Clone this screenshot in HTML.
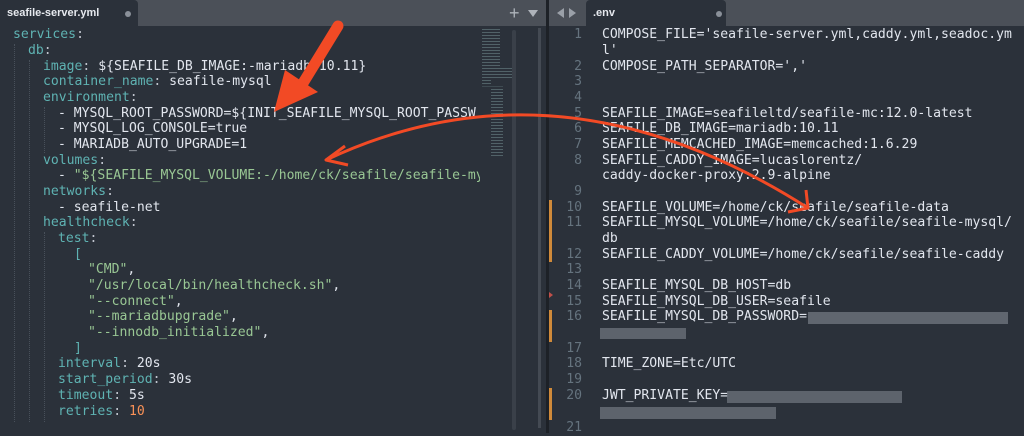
<!DOCTYPE html>
<html><head><meta charset="utf-8"><style>
*{margin:0;padding:0;box-sizing:border-box}
body{width:1024px;height:433px;overflow:hidden;background:#2b313a;position:relative;font-family:"DejaVu Sans Mono","Liberation Mono",monospace;font-size:13.1px}
.l{position:absolute;height:16px;line-height:16px;white-space:pre;color:#e2e6ee}
.k{color:#5fb3b3}.s{color:#99c794}.n{color:#f99157}.p{color:#c0c5ce}
.num{position:absolute;width:40px;text-align:right;color:#65737e;height:16px;line-height:16px}
.tabbar{position:absolute;top:0;height:26px;background:#4b5058}
.tab{position:absolute;top:0;height:26px;background:#2b313a;color:#e6e9ee;font-family:"Liberation Sans",sans-serif;font-size:11px;font-weight:bold;line-height:27px;padding-left:7px}
.dot{position:absolute;top:11px;width:6px;height:6px;border-radius:3px;background:#8a9099}
.blk{position:absolute;background:#6a7079}
.gm{position:absolute;left:549px;width:3px;background:#d08a3a}
#lc{position:absolute;left:0;top:0;width:480px;height:433px;overflow:hidden}
</style></head><body>
<div class="tabbar" style="left:0;width:546px;"></div>
<div class="tab" style="left:0;width:138px;border-radius:0 4px 0 0">seafile-server.yml</div>
<div class="dot" style="left:125px"></div>
<div style="position:absolute;left:509px;top:3px;color:#aeb3ba;font-family:'Liberation Sans';font-size:18px;line-height:20px">+</div>
<div style="position:absolute;left:528px;top:10px;width:0;height:0;border-left:5px solid transparent;border-right:5px solid transparent;border-top:7px solid #aeb3ba"></div>
<div style="position:absolute;left:546px;top:0;width:3px;height:433px;background:#1d2127"></div>
<div class="tabbar" style="left:549px;width:475px"></div>
<div style="position:absolute;left:557px;top:8px;border-top:5px solid transparent;border-bottom:5px solid transparent;border-right:7px solid #9aa0a8"></div>
<div style="position:absolute;left:569px;top:8px;border-top:5px solid transparent;border-bottom:5px solid transparent;border-left:7px solid #9aa0a8"></div>
<div class="tab" style="left:586px;width:140px;border-radius:4px 4px 0 0">.env</div>
<div class="dot" style="left:716px"></div>
<div style="position:absolute;left:482px;top:28px;width:30px;height:130px;opacity:.45;background:repeating-linear-gradient(#2b313a 0 1px,#7f9fa0 1px 2px,#2b313a 2px 3px);clip-path:polygon(0 0,60% 0,60% 30%,100% 30%,100% 40%,30% 40%,30% 100%,70% 100%,70% 45%,0 45%)"></div>
<div style="position:absolute;left:512px;top:30px;width:4px;height:400px;background:#3a4049;border-radius:2px"></div>
<div style="position:absolute;left:538px;top:28px;width:3px;height:400px;background:#444a53"></div>

<div id="lc">
<div style="position:absolute;left:14px;top:44px;height:378px;border-left:1px dotted #48505a"></div>
<div style="position:absolute;left:29px;top:60px;height:362px;border-left:1px dotted #48505a"></div>
<div style="position:absolute;left:44px;top:107px;height:46px;border-left:1px dotted #48505a"></div>
<div style="position:absolute;left:44px;top:232px;height:190px;border-left:1px dotted #48505a"></div>
<div class="l" style="left:13px;top:27px"><span class="k">services</span><span class="p">:</span></div>
<div class="l" style="left:28px;top:43px"><span class="k">db</span><span class="p">:</span></div>
<div class="l" style="left:43px;top:59px"><span class="k">image</span><span class="p">:</span> ${SEAFILE_DB_IMAGE:-mariadb:10.11}</div>
<div class="l" style="left:43px;top:74px"><span class="k">container_name</span><span class="p">:</span> seafile-mysql</div>
<div class="l" style="left:43px;top:90px"><span class="k">environment</span><span class="p">:</span></div>
<div class="l" style="left:58px;top:106px">- MYSQL_ROOT_PASSWORD=${INIT_SEAFILE_MYSQL_ROOT_PASSW</div>
<div class="l" style="left:58px;top:121px">- MYSQL_LOG_CONSOLE=true</div>
<div class="l" style="left:58px;top:137px">- MARIADB_AUTO_UPGRADE=1</div>
<div class="l" style="left:43px;top:153px"><span class="k">volumes</span><span class="p">:</span></div>
<div class="l" style="left:58px;top:168px">- <span class="s">"${SEAFILE_MYSQL_VOLUME:-/home/ck/seafile/seafile-my</span></div>
<div class="l" style="left:43px;top:184px"><span class="k">networks</span><span class="p">:</span></div>
<div class="l" style="left:58px;top:200px">- seafile-net</div>
<div class="l" style="left:43px;top:215px"><span class="k">healthcheck</span><span class="p">:</span></div>
<div class="l" style="left:58px;top:231px"><span class="k">test</span><span class="p">:</span></div>
<div class="l" style="left:74px;top:247px"><span class="k">[</span></div>
<div class="l" style="left:88px;top:262px"><span class="s">"CMD"</span>,</div>
<div class="l" style="left:88px;top:278px"><span class="s">"/usr/local/bin/healthcheck.sh"</span>,</div>
<div class="l" style="left:88px;top:294px"><span class="s">"--connect"</span>,</div>
<div class="l" style="left:88px;top:309px"><span class="s">"--mariadbupgrade"</span>,</div>
<div class="l" style="left:88px;top:325px"><span class="s">"--innodb_initialized"</span>,</div>
<div class="l" style="left:74px;top:341px"><span class="k">]</span></div>
<div class="l" style="left:58px;top:356px"><span class="k">interval</span><span class="p">:</span> 20s</div>
<div class="l" style="left:58px;top:372px"><span class="k">start_period</span><span class="p">:</span> 30s</div>
<div class="l" style="left:58px;top:388px"><span class="k">timeout</span><span class="p">:</span> 5s</div>
<div class="l" style="left:58px;top:404px"><span class="k">retries</span><span class="p">:</span> <span class="n">10</span></div>
</div>

<div class="gm" style="top:200px;height:16px"></div>
<div class="gm" style="top:216px;height:46px"></div>
<div class="gm" style="top:310px;height:32px"></div>
<div class="gm" style="top:388px;height:32px"></div>
<div style="position:absolute;left:549px;top:292px;border-top:3px solid transparent;border-bottom:3px solid transparent;border-left:4px solid #c0504a"></div>
<div class="num" style="left:542px;top:27px">1</div><div class="l" style="left:602px;top:27px">COMPOSE_FILE='seafile-server.yml,caddy.yml,seadoc.ym</div>
<div class="l" style="left:602px;top:43px">l'</div>
<div class="num" style="left:542px;top:59px">2</div><div class="l" style="left:602px;top:59px">COMPOSE_PATH_SEPARATOR=','</div>
<div class="num" style="left:542px;top:74px">3</div>
<div class="num" style="left:542px;top:90px">4</div>
<div class="num" style="left:542px;top:106px">5</div><div class="l" style="left:602px;top:106px">SEAFILE_IMAGE=seafileltd/seafile-mc:12.0-latest</div>
<div class="num" style="left:542px;top:121px">6</div><div class="l" style="left:602px;top:121px">SEAFILE_DB_IMAGE=mariadb:10.11</div>
<div class="num" style="left:542px;top:137px">7</div><div class="l" style="left:602px;top:137px">SEAFILE_MEMCACHED_IMAGE=memcached:1.6.29</div>
<div class="num" style="left:542px;top:153px">8</div><div class="l" style="left:602px;top:153px">SEAFILE_CADDY_IMAGE=lucaslorentz/</div>
<div class="l" style="left:602px;top:168px">caddy-docker-proxy:2.9-alpine</div>
<div class="num" style="left:542px;top:184px">9</div>
<div class="num" style="left:542px;top:200px">10</div><div class="l" style="left:602px;top:200px">SEAFILE_VOLUME=/home/ck/seafile/seafile-data</div>
<div class="num" style="left:542px;top:215px">11</div><div class="l" style="left:602px;top:215px">SEAFILE_MYSQL_VOLUME=/home/ck/seafile/seafile-mysql/</div>
<div class="l" style="left:602px;top:231px">db</div>
<div class="num" style="left:542px;top:247px">12</div><div class="l" style="left:602px;top:247px">SEAFILE_CADDY_VOLUME=/home/ck/seafile/seafile-caddy</div>
<div class="num" style="left:542px;top:262px">13</div>
<div class="num" style="left:542px;top:278px">14</div><div class="l" style="left:602px;top:278px">SEAFILE_MYSQL_DB_HOST=db</div>
<div class="num" style="left:542px;top:294px">15</div><div class="l" style="left:602px;top:294px">SEAFILE_MYSQL_DB_USER=seafile</div>
<div class="num" style="left:542px;top:309px">16</div><div class="l" style="left:602px;top:309px">SEAFILE_MYSQL_DB_PASSWORD=</div>
<div class="blk" style="left:808px;top:312px;width:200px;height:12px;opacity:.85"></div>
<div class="blk" style="left:600px;top:328px;width:86px;height:11px;opacity:.8"></div>
<div class="num" style="left:542px;top:341px">17</div>
<div class="num" style="left:542px;top:356px">18</div><div class="l" style="left:602px;top:356px">TIME_ZONE=Etc/UTC</div>
<div class="num" style="left:542px;top:372px">19</div>
<div class="num" style="left:542px;top:388px">20</div><div class="l" style="left:602px;top:388px">JWT_PRIVATE_KEY=</div>
<div class="blk" style="left:727px;top:391px;width:175px;height:12px;opacity:.8"></div>
<div class="blk" style="left:600px;top:407px;width:176px;height:12px;opacity:.8"></div>
<div class="num" style="left:542px;top:420px">21</div>

<svg style="position:absolute;left:0;top:0" width="1024" height="433">
<path d="M338,26 L300,88" stroke="#f24a25" stroke-width="11" stroke-linecap="round" fill="none"/>
<polygon points="274,112 285,70 318,92" fill="#f24a25"/>
<path d="M326,160 Q560,50 808,208" stroke="#f24a25" stroke-width="3" fill="none"/>
<path d="M345,146 L326,160 L348,165" stroke="#f24a25" stroke-width="3" fill="none" stroke-linejoin="round"/>
<path d="M806,190 L808,208 L788,212" stroke="#f24a25" stroke-width="3" fill="none" stroke-linejoin="round"/>
</svg>
</body></html>
